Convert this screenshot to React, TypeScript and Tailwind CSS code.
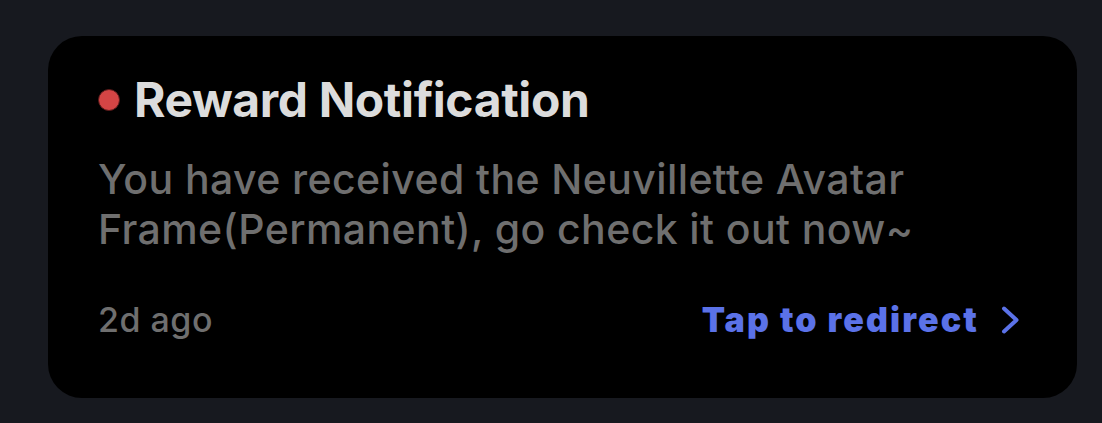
import React from 'react'

const font = { fontFamily: 'Inter, "Noto Sans", sans-serif' }

const ChevronRight: React.FC<{ className?: string }> = ({ className }) => (
  <svg viewBox="0 0 18 28" className={className} fill="none">
    <path
      d="M3 2.5 L15.5 14 L3 25.5"
      stroke="currentColor"
      strokeWidth="4"
      strokeLinecap="round"
      strokeLinejoin="round"
    />
  </svg>
)

export default function App() {
  return (
    <div
      className="min-h-screen w-full bg-[#17191f] pl-[48px] pr-[25px] pt-[36px]"
      style={font}
    >
      <div className="h-[362px] rounded-[34px] bg-black pl-[50px] pr-[58px] pt-[36px]">
        {/* Title */}
        <div className="flex items-center gap-[14px]">
          <span className="h-[22px] w-[22px] rounded-full border border-[#5a1a1a] bg-[#d44545]" />
          <h1 className="text-[48px] font-bold leading-[56px] tracking-[-0.4px] text-[#dcdcdc]">
            Reward Notification
          </h1>
        </div>

        {/* Body */}
        <p className="mt-[26px] text-[41px] font-medium leading-[50px] tracking-[0.4px] text-[#6f6f6f]">
          You have received the Neuvillette Avatar
          <br />
          Frame(Permanent), go check it out now~
        </p>

        {/* Footer */}
        <div className="mt-[46px] flex items-center justify-between">
          <span className="text-[34px] font-medium leading-[40px] tracking-[0.5px] text-[#6f6f6f]">
            2d ago
          </span>
          <button className="flex items-center gap-[22px] text-[34px] font-black leading-[40px] tracking-[2.1px] text-[#5b72e8]">
            Tap to redirect
            <ChevronRight className="h-[28px] w-[18px]" />
          </button>
        </div>
      </div>
    </div>
  )
}
